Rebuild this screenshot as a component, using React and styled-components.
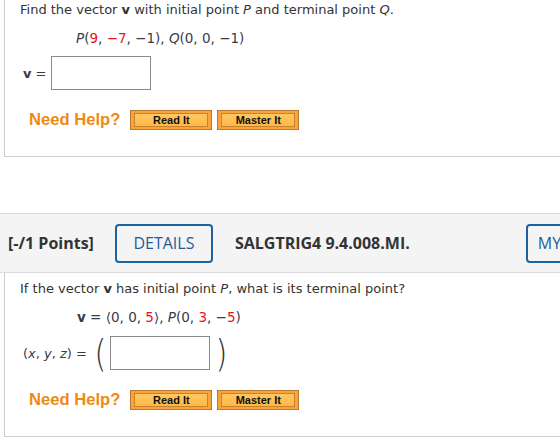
import React from "react";
import styled, { createGlobalStyle } from "styled-components";

const Global = createGlobalStyle`
  html, body { margin: 0; padding: 0; background: #fff; }
  body { width: 560px; height: 447px; overflow: hidden; font-family: "DejaVu Sans", Verdana, sans-serif; color: #333; }
`;

const Card = styled.section`
  margin-left: 4px;
  border-left: 1px solid #cfcfcf;
  border-bottom: 1px solid #cfcfcf;
  padding: ${p => p.$pad};
  height: ${p => p.$h}px;
  box-sizing: border-box;
`;

const Prompt = styled.div`
  font-size: 13px;
  line-height: 16px;
  color: #333;
`;

const MathLine = styled.div`
  font-size: 13.5px;
  line-height: 16px;
  color: #3a3a48;
  margin: ${p => p.$m};
  padding-left: ${p => p.$indent}px;
`;

const Red = styled.span`
  color: #e8141b;
`;

const It = styled.i`
  font-style: italic;
`;

const B = styled.b`
  font-weight: bold;
`;

const AnswerRow = styled.div`
  display: flex;
  align-items: center;
  margin: ${p => p.$m};
  padding-left: 3px;
  font-size: 13px;
  color: #3a3a48;
`;

const Label = styled.span`
  margin-right: ${p => p.$gap}px;
  white-space: pre;
`;

const Input = styled.div`
  width: 100px;
  height: 34px;
  box-sizing: border-box;
  border: 1px solid #8a8a8a;
  background: #fff;
`;

const Paren = styled.span`
  font-family: "DejaVu Sans", sans-serif;
  font-weight: 200;
  font-size: 38px;
  line-height: 34px;
  color: #333;
  margin: ${p => p.$m};
  display: inline-block;
  transform: scaleX(0.8);
`;

const HelpRow = styled.div`
  display: flex;
  align-items: center;
  margin: ${p => p.$m};
  padding-left: 9px;
`;

const HelpText = styled.span`
  font-family: "Liberation Sans", Arial, sans-serif;
  font-weight: bold;
  font-size: 16.6px;
  color: #ee8a14;
  margin-right: 10px;
`;

const HelpButton = styled.div`
  width: 82px;
  height: 20px;
  box-sizing: border-box;
  border: 1px solid #b8782e;
  background: #f9a33c;
  padding: 2px 3px;
  margin-right: 5px;
  display: flex;
`;

const HelpInner = styled.div`
  flex: 1;
  border: 1px solid #c9822f;
  background: linear-gradient(#ffc862, #ffb946);
  font-family: "Liberation Sans", Arial, sans-serif;
  font-weight: bold;
  font-size: 11px;
  color: #111;
  display: flex;
  align-items: center;
  justify-content: center;
`;

const Spacer = styled.div`
  height: 56px;
`;

const Header = styled.header`
  display: flex;
  align-items: center;
  height: 58px;
  background: #f4f4f4;
  border-top: 1px solid #dcdcdc;
  border-bottom: 1px solid #dcdcdc;
  padding-left: 8px;
  overflow: hidden;
  font-family: "Open Sans", sans-serif;
  color: #333;
`;

const Points = styled.span`
  font-weight: bold;
  font-size: 16px;
  margin-right: 21px;
  white-space: nowrap;
`;

const Title = styled.span`
  font-weight: bold;
  font-size: 16px;
  white-space: nowrap;
`;

const OutlineButton = styled.div`
  flex-shrink: 0;
  width: 98px;
  height: 39px;
  box-sizing: border-box;
  border: 2px solid #1b62a0;
  border-radius: 4px;
  color: #1b5f96;
  font-size: 16px;
  display: flex;
  align-items: center;
  justify-content: ${p => (p.$left ? "flex-start" : "center")};
  padding-left: ${p => (p.$left ? 10 : 0)}px;
  margin: ${p => p.$m};
  overflow: hidden;
  white-space: nowrap;
`;

function Help({ m }) {
  return (
    <HelpRow $m={m}>
      <HelpText>Need Help?</HelpText>
      <HelpButton><HelpInner>Read It</HelpInner></HelpButton>
      <HelpButton><HelpInner>Master It</HelpInner></HelpButton>
    </HelpRow>
  );
}

export default function App() {
  return (
    <>
      <Global />
      <Card $pad="2px 0 0 15px" $h={157}>
        <Prompt>
          Find the vector <B>v</B> with initial point <It>P</It> and terminal point <It>Q</It>.
        </Prompt>
        <MathLine $m="12px 0 0 0" $indent={56}>
          <It>P</It>(<Red>9</Red>, <Red>−7</Red>, −1), <It>Q</It>(0, 0, −1)
        </MathLine>
        <AnswerRow $m="10px 0 0 0">
          <Label $gap={4}><B>v</B> =</Label>
          <Input />
        </AnswerRow>
        <Help m="20px 0 0 0" />
      </Card>
      <Spacer />
      <Header>
        <Points>[-/1 Points]</Points>
        <OutlineButton $m="0 22px 0 0">DETAILS</OutlineButton>
        <Title>SALGTRIG4 9.4.008.MI.</Title>
        <OutlineButton $left $m="0 0 0 116px">MY NOTES</OutlineButton>
      </Header>
      <Card $pad="8px 0 0 15px" $h={164}>
        <Prompt>
          If the vector <B>v</B> has initial point <It>P</It>, what is its terminal point?
        </Prompt>
        <MathLine $m="12px 0 0 0" $indent={57}>
          <B>v</B> = ⟨0, 0, <Red>5</Red>⟩, <It>P</It>(0, <Red>3</Red>, −<Red>5</Red>)
        </MathLine>
        <AnswerRow $m="11px 0 0 0">
          <Label $gap={2}>(<It>x</It>, <It>y</It>, <It>z</It>) = </Label>
          <Paren $m="0 2px 0 0">(</Paren>
          <Input />
          <Paren $m="0 0 0 4px">)</Paren>
        </AnswerRow>
        <Help m="20px 0 0 0" />
      </Card>
    </>
  );
}
